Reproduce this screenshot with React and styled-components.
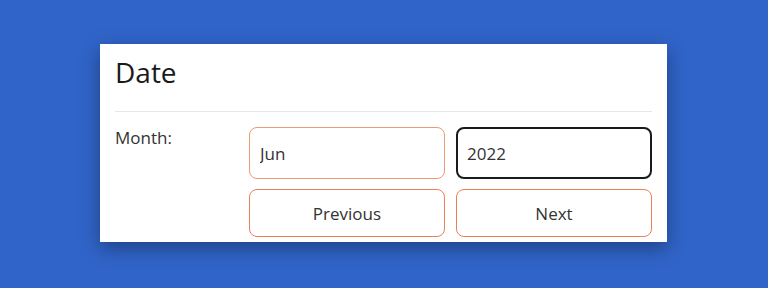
import React from 'react';
import styled, { createGlobalStyle } from 'styled-components';

const Global = createGlobalStyle`
  html, body {
    margin: 0;
    padding: 0;
    background: #3064c8;
    font-family: "Open Sans", "Noto Sans", sans-serif;
  }
`

const Page = styled.div`
  width: 768px;
  height: 288px;
  padding-top: 44px;
  padding-left: 100px;
  box-sizing: border-box;
  overflow: hidden;
`

const Card = styled.div`
  width: 567px;
  height: 198px;
  background: #fff;
  box-shadow: 0 6px 18px rgba(0,0,0,0.35);
  padding: 0 15px;
  box-sizing: border-box;
`

const Title = styled.div`
  font-size: 28px;
  color: #1a1a1a;
  height: 67px;
  line-height: 56px;
  border-bottom: 1px solid #e6e6e6;
`

const Form = styled.div`
  display: grid;
  grid-template-columns: 123px 196px 196px;
  column-gap: 11px;
  row-gap: 10px;
  padding-top: 15px;
`

const Label = styled.div`
  font-size: 17px;
  color: #333;
  line-height: 22px;
`

const Field = styled.input`
  height: 52px;
  box-sizing: border-box;
  border: ${p => p.focused ? '2px solid #1a1a1a' : '1px solid #ed9a74'};
  border-radius: 8px;
  padding: 0 ${p => p.focused ? '9px' : '10px'};
  font-family: inherit;
  font-size: 17px;
  color: #333;
  outline: none;
  width: 100%;
`

const Button = styled.button`
  height: 48px;
  border: 1px solid #e8805a;
  border-radius: 8px;
  background: #fff;
  font-family: inherit;
  font-size: 17px;
  color: #333;
`

export default function App() {
  return (
    <Page>
      <Global />
      <Card>
        <Title>Date</Title>
        <Form>
          <Label>Month:</Label>
          <Field defaultValue="Jun" />
          <Field defaultValue="2022" focused />
          <span />
          <Button>Previous</Button>
          <Button>Next</Button>
        </Form>
      </Card>
    </Page>
  )
}
